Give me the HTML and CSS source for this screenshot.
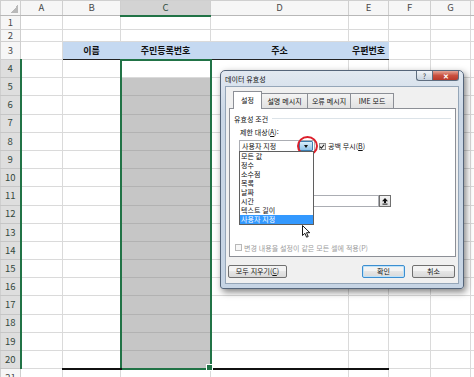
FILE: index.html
```html
<!DOCTYPE html>
<html lang="ko">
<head>
    <meta charset="UTF-8">
    <title>데이터 유효성</title>
    <link rel="stylesheet" href="styles.css">
</head>
<body>
    <table class="sheet">
        <colgroup>
            <col class="w-hd"><col class="w-a"><col class="w-b"><col class="w-c"><col class="w-d"><col class="w-e"><col class="w-f"><col class="w-g"><col class="w-h">
        </colgroup>
        <thead>
            <tr><th class="corner"></th><th>A</th><th>B</th><th class="sel-hd">C</th><th>D</th><th>E</th><th>F</th><th>G</th><th></th></tr>
        </thead>
        <tbody>
            <tr class="r1"><th>1</th><td></td><td></td><td></td><td></td><td></td><td></td><td></td><td></td></tr>
            <tr class="r2"><th>2</th><td></td><td></td><td></td><td></td><td></td><td></td><td></td><td></td></tr>
            <tr class="r3"><th>3</th><td></td><td class="band">이름</td><td class="band">주민등록번호</td><td class="band">주소</td><td class="band">우편번호</td><td></td><td></td><td></td></tr>
            <tr><th class="on">4</th><td></td><td></td><td class="sel first"></td><td></td><td></td><td></td><td></td><td></td></tr>
            <tr><th class="on">5</th><td></td><td></td><td class="sel fill"></td><td></td><td></td><td></td><td></td><td></td></tr>
            <tr><th class="on">6</th><td></td><td></td><td class="sel fill"></td><td></td><td></td><td></td><td></td><td></td></tr>
            <tr><th class="on">7</th><td></td><td></td><td class="sel fill"></td><td></td><td></td><td></td><td></td><td></td></tr>
            <tr><th class="on">8</th><td></td><td></td><td class="sel fill"></td><td></td><td></td><td></td><td></td><td></td></tr>
            <tr><th class="on">9</th><td></td><td></td><td class="sel fill"></td><td></td><td></td><td></td><td></td><td></td></tr>
            <tr><th class="on">10</th><td></td><td></td><td class="sel fill"></td><td></td><td></td><td></td><td></td><td></td></tr>
            <tr><th class="on">11</th><td></td><td></td><td class="sel fill"></td><td></td><td></td><td></td><td></td><td></td></tr>
            <tr><th class="on">12</th><td></td><td></td><td class="sel fill"></td><td></td><td></td><td></td><td></td><td></td></tr>
            <tr><th class="on">13</th><td></td><td></td><td class="sel fill"></td><td></td><td></td><td></td><td></td><td></td></tr>
            <tr><th class="on">14</th><td></td><td></td><td class="sel fill"></td><td></td><td></td><td></td><td></td><td></td></tr>
            <tr><th class="on">15</th><td></td><td></td><td class="sel fill"></td><td></td><td></td><td></td><td></td><td></td></tr>
            <tr><th class="on">16</th><td></td><td></td><td class="sel fill"></td><td></td><td></td><td></td><td></td><td></td></tr>
            <tr><th class="on">17</th><td></td><td></td><td class="sel fill"></td><td></td><td></td><td></td><td></td><td></td></tr>
            <tr><th class="on">18</th><td></td><td></td><td class="sel fill"></td><td></td><td></td><td></td><td></td><td></td></tr>
            <tr><th class="on">19</th><td></td><td></td><td class="sel fill"></td><td></td><td></td><td></td><td></td><td></td></tr>
            <tr><th class="on">20</th><td></td><td class="end"></td><td class="sel fill last"></td><td class="end"></td><td class="end"></td><td></td><td></td><td></td></tr>
            <tr><th>21</th><td></td><td></td><td></td><td></td><td></td><td></td><td></td><td></td></tr>
        </tbody>
    </table>

    <div class="dialog">
        <div class="titlebar">
            <span class="title">데이터 유효성</span>
            <span class="cap-btn help">?</span>
            <span class="cap-btn close">✕</span>
        </div>
        <div class="client">
            <div class="tabs">
                <span class="tab on">설정</span>
                <span class="tab w46">설명 메시지</span>
                <span class="tab">오류 메시지</span>
                <span class="tab">IME 모드</span>
            </div>
            <div class="panel">
                <div class="legend"><span>유효성 조건</span></div>
                <div class="label">제한 대상(<u>A</u>):</div>
                <div class="combo-row">
                    <div class="combo">
                        <span class="combo-text">사용자 지정</span>
                        <span class="combo-btn"></span>
                        <span class="ring"></span>
                        <ul class="list">
                            <li>모든 값</li>
                            <li>정수</li>
                            <li>소수점</li>
                            <li>목록</li>
                            <li>날짜</li>
                            <li>시간</li>
                            <li>텍스트 길이</li>
                            <li class="hit">사용자 지정</li>
                        </ul>
                    </div>
                    <div class="check">
                        <span class="box">
                            <svg viewBox="0 0 7 7" width="7" height="7"><path d="M1 3.6 L2.8 5.4 L6 1.4" fill="none" stroke="#1a1a1a" stroke-width="1.2"/></svg>
                        </span>
                        <span>공백 무시(<u>B</u>)</span>
                    </div>
                </div>
                <div class="ref-row">
                    <span class="ref-input"></span>
                    <span class="ref-btn">
                        <svg viewBox="0 0 8 8" width="8" height="8"><path d="M4 1 L7 4.2 L5 4.2 L5 6 L3 6 L3 4.2 L1 4.2 Z" fill="#111"/><rect x="1.5" y="6.6" width="5" height="1" fill="#111"/></svg>
                    </span>
                </div>
                <div class="check apply"><span class="box"></span><span>변경 내용을 설정이 같은 모든 셀에 적용(P)</span></div>
            </div>
            <div class="buttons">
                <span class="btn clear">모두 지우기(<u>C</u>)</span>
                <span class="btn ok">확인</span>
                <span class="btn">취소</span>
            </div>
        </div>
        <svg class="cursor" viewBox="0 0 9 13" width="9" height="13"><path d="M0.5 0.5 L0.5 10.5 L2.9 8.3 L4.6 12.2 L6.2 11.5 L4.5 7.7 L7.8 7.7 Z" fill="#fff" stroke="#000" stroke-width="0.9" stroke-linejoin="round"/></svg>
    </div>
</body>
</html>
```

FILE: styles.css
```css
* {
    margin: 0;
    padding: 0;
    box-sizing: border-box;
}

body {
    position: relative;
    width: 474px;
    height: 377px;
    overflow: hidden;
    background: #fff;
    font-family: "Noto Sans CJK KR", "Noto Sans", sans-serif;
}

/* 시트 */
.sheet {
    border-collapse: collapse;
    table-layout: fixed;
    width: 490px;
    font-size: 9px;
}

.w-hd { width: 20px; }
.w-a { width: 42px; }
.w-b { width: 58px; }
.w-c { width: 90px; }
.w-d { width: 138px; }
.w-e { width: 40px; }
.w-f { width: 42px; }
.w-g { width: 40px; }
.w-h { width: 20px; }

.sheet th,
.sheet td {
    border: 1px solid #dadada;
    padding: 0;
    white-space: nowrap;
    text-align: center;
    line-height: 1;
}

.sheet tr { height: 18.2px; }
.sheet thead tr { height: 15px; }
.sheet .r1 { height: 14px; }
.sheet .r2 { height: 12px; }
.sheet .r3 { height: 18px; }

.sheet th {
    background: #f6f6f6;
    color: #4a4a4a;
    font-weight: normal;
    font-size: 9.5px;
    border-color: #cfcfcf;
}

.sheet thead th {
    border-bottom-color: #b8b8b8;
}

.sheet .corner {
    background: #f6f6f6 linear-gradient(135deg, transparent 50%, #b9b9b9 50%) no-repeat right 2px bottom 2px / 8px 8px;
}

.sheet .sel-hd {
    background: #d3d3d3;
    color: #2f4f3e;
    border-bottom: 2px solid #217346;
}

.sheet th.on {
    background: #dedede;
    color: #34483d;
    border-right: 2px solid #217346;
    border-bottom-color: #c6c6c6;
}

.sheet .band {
    background: #c5d9f1;
    border-color: #c5d9f1;
    border-bottom: 1px solid #222;
    font-weight: bold;
    color: #111;
    font-size: 9px;
}

.sheet .sel {
    border-left: 2px solid #217346;
    border-right: 2px solid #217346;
}

.sheet .first {
    background: #fff;
    border-top: 2px solid #217346;
}

.sheet .fill {
    background: #c6c6c6;
    border-top-color: #b2b2b2;
    border-bottom-color: #b2b2b2;
}

.sheet .end {
    border-bottom: 2px solid #111;
}

.sheet .last {
    position: relative;
    border-bottom: 2px solid #217346;
}

.sheet .last::after {
    content: '';
    position: absolute;
    right: -3px;
    bottom: -3px;
    width: 5px;
    height: 5px;
    background: #217346;
    border: 1px solid #fff;
}

/* 대화 상자 */
.dialog {
    position: absolute;
    left: 220px;
    top: 70px;
    width: 244px;
    height: 219px;
    display: flex;
    flex-direction: column;
    padding: 0 4px 4px;
    border: 1px solid #55657a;
    border-radius: 5px 5px 3px 3px;
    background: linear-gradient(#e2e9f1, #cad7e6 20%, #c6d4e4);
    box-shadow: 2px 3px 7px rgba(0, 0, 0, 0.5);
    font-size: 7px;
    color: #111;
}

.titlebar {
    display: flex;
    align-items: flex-start;
    height: 15px;
}

.title {
    flex: 1;
    line-height: 15px;
    padding-top: 1px;
}

.cap-btn {
    height: 10px;
    line-height: 10px;
    text-align: center;
    border: 1px solid #5f6e80;
    border-top: none;
}

.help {
    width: 16px;
    border-radius: 0 0 0 3px;
    border-right: none;
    background: linear-gradient(#f1f4f8, #c8d3df);
    color: #333;
    font-size: 7px;
}

.close {
    width: 27px;
    border-radius: 0 0 3px 0;
    background: linear-gradient(#e5a496, #c9503f 50%, #b8392b);
    color: #fff;
    font-size: 7px;
    font-weight: bold;
}

.client {
    flex: 1;
    display: flex;
    flex-direction: column;
    background: #f0f0f0;
    border: 1px solid #95a6b8;
}

.tabs {
    display: flex;
    align-items: flex-end;
    height: 17px;
    margin: 4px 0 0 7px;
}

.tab {
    width: 44px;
    height: 15px;
    margin-left: -1px;
    line-height: 14px;
    text-align: center;
    border: 1px solid #8c8f96;
    border-bottom: none;
    background: linear-gradient(#f4f4f4, #e1e1e1);
}

.tab.w46 { width: 47px; }

.tab.on {
    position: relative;
    z-index: 1;
    width: 29px;
    height: 18px;
    margin: 0 0 -1px 0;
    line-height: 16px;
    background: #fff;
}

.panel {
    height: 149px;
    margin: 0 2px 0 3px;
    background: #fff;
    border: 1px solid #8c8f96;
    display: flex;
    flex-direction: column;
}

.legend {
    display: flex;
    align-items: center;
    height: 9px;
    margin: 5px 4px 0 4px;
}

.legend::after {
    content: '';
    flex: 1;
    height: 1px;
    margin-left: 4px;
    background: #dce3e8;
}

.label {
    height: 9px;
    line-height: 9px;
    margin: 5px 0 0 10px;
}

.combo-row {
    display: flex;
    align-items: center;
    height: 12px;
    margin: 3px 0 0 9px;
}

.combo {
    position: relative;
    display: flex;
    align-items: center;
    width: 76px;
    height: 12px;
    border: 1px solid #abadb3;
    background: #fff;
}

.combo-text {
    flex: 1;
    padding-left: 2px;
    line-height: 10px;
}

.combo-btn {
    width: 14px;
    height: 10px;
    margin-right: 1px;
    border: 1px solid #3c7fb1;
    border-radius: 1px;
    background: linear-gradient(#d9eefb, #8fc3e9);
    display: flex;
    justify-content: center;
    align-items: center;
}

.combo-btn::before {
    content: '';
    border-left: 2.5px solid transparent;
    border-right: 2.5px solid transparent;
    border-top: 3px solid #111;
}

.ring {
    position: absolute;
    left: 57px;
    top: -5px;
    width: 21px;
    height: 20px;
    border: 2px solid #dc1f2b;
    border-radius: 50%;
}

.list {
    position: absolute;
    left: -1px;
    top: 10px;
    width: 75px;
    list-style: none;
    background: #fff;
    border: 1px solid #5f5f5f;
    z-index: 2;
}

.list li {
    height: 9px;
    line-height: 9px;
    padding-left: 1px;
}

.list .hit {
    background: #3399ff;
    color: #fff;
}

.check {
    display: flex;
    align-items: center;
    gap: 2px;
    margin-left: 4px;
}

.box {
    width: 7px;
    height: 7px;
    border: 1px solid #8e8f8f;
    background: linear-gradient(#e6e6e6, #fafafa);
    display: flex;
}

.box svg {
    margin: -1px 0 0 -1px;
}

.ref-row {
    display: flex;
    height: 12px;
    margin: 43px 0 0 10px;
}

.ref-input {
    width: 139px;
    border: 1px solid #abadb3;
    background: #fff;
}

.ref-btn {
    width: 12px;
    border: 1px solid #707070;
    background: linear-gradient(#f4f4f4, #dcdcdc);
    display: flex;
    justify-content: center;
    align-items: center;
}

.apply {
    height: 9px;
    margin: 36px 0 0 5px;
    color: #9d9d9d;
}

.apply .box {
    border-color: #b8b8b8;
    background: #f7f7f7;
}

.buttons {
    display: flex;
    gap: 7px;
    margin: 8px 3px 0 2px;
}

.btn {
    width: 43px;
    height: 13px;
    line-height: 11px;
    text-align: center;
    border: 1px solid #707070;
    border-radius: 2px;
    background: linear-gradient(#f3f3f3 50%, #e6e6e6 50%, #d9d9d9);
}

.btn.clear {
    width: 59px;
    margin-right: auto;
}

.btn.ok {
    border-color: #3c8ed0;
    box-shadow: inset 0 0 0 1px #bfe2f8;
}

.cursor {
    position: absolute;
    left: 81px;
    top: 154px;
    z-index: 3;
}
```
